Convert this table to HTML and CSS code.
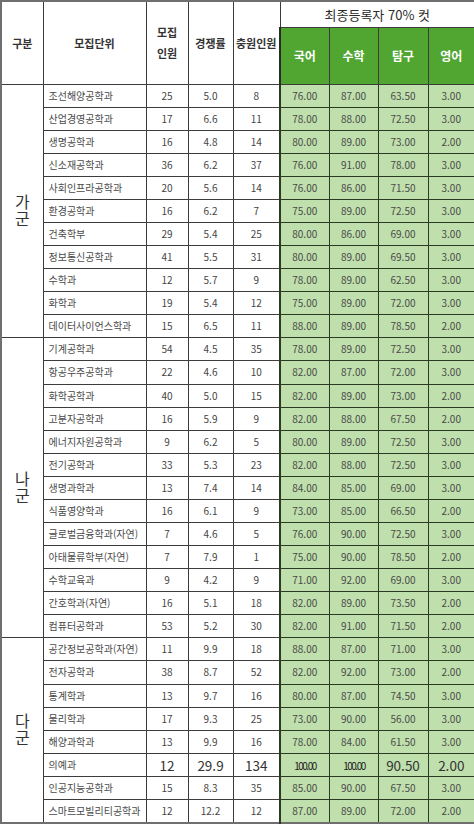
FILE: index.html
```html
<!DOCTYPE html>
<html lang="ko">
<head>
<meta charset="utf-8">
<title>최종등록자 70% 컷</title>
<link rel="stylesheet" href="styles.css">
</head>
<body>
<table class="cut">
  <colgroup>
    <col class="c-grp"><col class="c-dept"><col class="c-num"><col class="c-rate"><col class="c-fill">
    <col class="c-kor"><col class="c-math"><col class="c-inq"><col class="c-eng">
  </colgroup>
  <thead>
    <tr class="h1">
      <th rowspan="2" class="hl">구분</th>
      <th rowspan="2" class="hl">모집단위</th>
      <th rowspan="2" class="hl two">모집<br>인원</th>
      <th rowspan="2" class="hl">경쟁률</th>
      <th rowspan="2" class="hl fill-h">충원인원</th>
      <th colspan="4" class="top">최종등록자 70% 컷</th>
    </tr>
    <tr class="h2">
      <th class="gh gfirst">국어</th>
      <th class="gh">수학</th>
      <th class="gh">탐구</th>
      <th class="gh">영어</th>
    </tr>
  </thead>
  <tbody>
    <tr><td rowspan="11" class="grp"><span class="vt">가군</span></td><td class="dept">조선해양공학과</td><td>25</td><td>5.0</td><td>8</td><td class="g gfirst">76.00</td><td class="g">87.00</td><td class="g">63.50</td><td class="g">3.00</td></tr>
    <tr><td class="dept">산업경영공학과</td><td>17</td><td>6.6</td><td>11</td><td class="g gfirst">78.00</td><td class="g">88.00</td><td class="g">72.50</td><td class="g">3.00</td></tr>
    <tr><td class="dept">생명공학과</td><td>16</td><td>4.8</td><td>14</td><td class="g gfirst">80.00</td><td class="g">89.00</td><td class="g">73.00</td><td class="g">2.00</td></tr>
    <tr><td class="dept">신소재공학과</td><td>36</td><td>6.2</td><td>37</td><td class="g gfirst">76.00</td><td class="g">91.00</td><td class="g">78.00</td><td class="g">3.00</td></tr>
    <tr><td class="dept">사회인프라공학과</td><td>20</td><td>5.6</td><td>14</td><td class="g gfirst">76.00</td><td class="g">86.00</td><td class="g">71.50</td><td class="g">3.00</td></tr>
    <tr><td class="dept">환경공학과</td><td>16</td><td>6.2</td><td>7</td><td class="g gfirst">75.00</td><td class="g">89.00</td><td class="g">72.50</td><td class="g">3.00</td></tr>
    <tr><td class="dept">건축학부</td><td>29</td><td>5.4</td><td>25</td><td class="g gfirst">80.00</td><td class="g">86.00</td><td class="g">69.00</td><td class="g">3.00</td></tr>
    <tr><td class="dept">정보통신공학과</td><td>41</td><td>5.5</td><td>31</td><td class="g gfirst">80.00</td><td class="g">89.00</td><td class="g">69.50</td><td class="g">3.00</td></tr>
    <tr><td class="dept">수학과</td><td>12</td><td>5.7</td><td>9</td><td class="g gfirst">78.00</td><td class="g">89.00</td><td class="g">62.50</td><td class="g">3.00</td></tr>
    <tr><td class="dept">화학과</td><td>19</td><td>5.4</td><td>12</td><td class="g gfirst">75.00</td><td class="g">89.00</td><td class="g">72.00</td><td class="g">3.00</td></tr>
    <tr><td class="dept">데이터사이언스학과</td><td>15</td><td>6.5</td><td>11</td><td class="g gfirst">88.00</td><td class="g">89.00</td><td class="g">78.50</td><td class="g">2.00</td></tr>

    <tr><td rowspan="13" class="grp"><span class="vt">나군</span></td><td class="dept">기계공학과</td><td>54</td><td>4.5</td><td>35</td><td class="g gfirst">78.00</td><td class="g">89.00</td><td class="g">72.50</td><td class="g">3.00</td></tr>
    <tr><td class="dept">항공우주공학과</td><td>22</td><td>4.6</td><td>10</td><td class="g gfirst">82.00</td><td class="g">87.00</td><td class="g">72.00</td><td class="g">3.00</td></tr>
    <tr><td class="dept">화학공학과</td><td>40</td><td>5.0</td><td>15</td><td class="g gfirst">82.00</td><td class="g">89.00</td><td class="g">73.00</td><td class="g">2.00</td></tr>
    <tr><td class="dept">고분자공학과</td><td>16</td><td>5.9</td><td>9</td><td class="g gfirst">82.00</td><td class="g">88.00</td><td class="g">67.50</td><td class="g">2.00</td></tr>
    <tr><td class="dept">에너지자원공학과</td><td>9</td><td>6.2</td><td>5</td><td class="g gfirst">80.00</td><td class="g">89.00</td><td class="g">72.50</td><td class="g">3.00</td></tr>
    <tr><td class="dept">전기공학과</td><td>33</td><td>5.3</td><td>23</td><td class="g gfirst">82.00</td><td class="g">88.00</td><td class="g">72.50</td><td class="g">3.00</td></tr>
    <tr><td class="dept">생명과학과</td><td>13</td><td>7.4</td><td>14</td><td class="g gfirst">84.00</td><td class="g">85.00</td><td class="g">69.00</td><td class="g">3.00</td></tr>
    <tr><td class="dept">식품영양학과</td><td>16</td><td>6.1</td><td>9</td><td class="g gfirst">73.00</td><td class="g">85.00</td><td class="g">66.50</td><td class="g">2.00</td></tr>
    <tr><td class="dept">글로벌금융학과(자연)</td><td>7</td><td>4.6</td><td>5</td><td class="g gfirst">76.00</td><td class="g">90.00</td><td class="g">72.50</td><td class="g">3.00</td></tr>
    <tr><td class="dept">아태물류학부(자연)</td><td>7</td><td>7.9</td><td>1</td><td class="g gfirst">75.00</td><td class="g">90.00</td><td class="g">78.50</td><td class="g">2.00</td></tr>
    <tr><td class="dept">수학교육과</td><td>9</td><td>4.2</td><td>9</td><td class="g gfirst">71.00</td><td class="g">92.00</td><td class="g">69.00</td><td class="g">3.00</td></tr>
    <tr><td class="dept">간호학과(자연)</td><td>16</td><td>5.1</td><td>18</td><td class="g gfirst">82.00</td><td class="g">89.00</td><td class="g">73.50</td><td class="g">2.00</td></tr>
    <tr><td class="dept">컴퓨터공학과</td><td>53</td><td>5.2</td><td>30</td><td class="g gfirst">82.00</td><td class="g">91.00</td><td class="g">71.50</td><td class="g">2.00</td></tr>

    <tr><td rowspan="8" class="grp"><span class="vt">다군</span></td><td class="dept">공간정보공학과(자연)</td><td>11</td><td>9.9</td><td>18</td><td class="g gfirst">88.00</td><td class="g">87.00</td><td class="g">71.00</td><td class="g">3.00</td></tr>
    <tr><td class="dept">전자공학과</td><td>38</td><td>8.7</td><td>52</td><td class="g gfirst">82.00</td><td class="g">92.00</td><td class="g">73.00</td><td class="g">2.00</td></tr>
    <tr><td class="dept">통계학과</td><td>13</td><td>9.7</td><td>16</td><td class="g gfirst">80.00</td><td class="g">87.00</td><td class="g">74.50</td><td class="g">3.00</td></tr>
    <tr><td class="dept">물리학과</td><td>17</td><td>9.3</td><td>25</td><td class="g gfirst">73.00</td><td class="g">90.00</td><td class="g">56.00</td><td class="g">3.00</td></tr>
    <tr><td class="dept">해양과학과</td><td>13</td><td>9.9</td><td>16</td><td class="g gfirst">78.00</td><td class="g">84.00</td><td class="g">61.50</td><td class="g">3.00</td></tr>
    <tr class="big"><td class="dept">의예과</td><td>12</td><td>29.9</td><td>134</td><td class="g gfirst"><span class="squeeze">100.00</span></td><td class="g"><span class="squeeze">100.00</span></td><td class="g">90.50</td><td class="g">2.00</td></tr>
    <tr><td class="dept">인공지능공학과</td><td>15</td><td>8.3</td><td>35</td><td class="g gfirst">85.00</td><td class="g">90.00</td><td class="g">67.50</td><td class="g">3.00</td></tr>
    <tr><td class="dept">스마트모빌리티공학과</td><td>12</td><td>12.2</td><td>12</td><td class="g gfirst">87.00</td><td class="g">89.00</td><td class="g">72.00</td><td class="g">2.00</td></tr>
  </tbody>
</table>
</body>
</html>
```

FILE: styles.css
```css
html, body {
  margin: 0;
  padding: 0;
  background: #ffffff;
}

.cut {
  width: 474px;
  table-layout: fixed;
  border-collapse: collapse;
  border: 2px solid #6f6f6f;
  font-family: "Noto Sans CJK KR", "Noto Sans", sans-serif;
  color: #3a3a3a;
}

.c-grp { width: 42px; }
.c-dept { width: 103px; }
.c-num { width: 42px; }
.c-rate { width: 45px; }
.c-fill { width: 47px; }
.c-kor { width: 49px; }
.c-math { width: 49px; }
.c-inq { width: 50px; }
.c-eng { width: 47px; }

.cut th,
.cut td {
  border: 1px solid #3c3c3c;
  padding: 0;
  text-align: center;
  vertical-align: middle;
  overflow: hidden;
  white-space: nowrap;
}

.h1 { height: 26px; }
.h2 { height: 57px; }

.hl {
  font-size: 11px;
  font-weight: 700;
  color: #333333;
  background: #ffffff;
}

.hl.two {
  line-height: 21px;
}

.top {
  font-size: 13px;
  font-weight: 400;
  color: #2a2a2a;
  background: #ffffff;
  border-left: 2px solid #2a2a2a;
}

.gh {
  background: #50a630;
  color: #ffffff;
  font-size: 12px;
  font-weight: 700;
  border-color: #2c3a24;
}

.cut tbody tr {
  height: 23.08px;
}

.cut td {
  font-size: 10px;
  line-height: 12px;
  color: #444444;
}

.cut td.dept {
  text-align: left;
  padding-left: 5px;
  color: #4a4a4a;
}

.cut td.grp {
  font-size: 16px;
  color: #333333;
  font-weight: 400;
}

.vt {
  display: inline-block;
  writing-mode: vertical-rl;
  text-orientation: upright;
  letter-spacing: 1px;
  line-height: 16px;
}

.cut td.g {
  background: #bfdfac;
  color: #4a4a4a;
  border-color: #2c3a24;
}

.cut .gfirst {
  border-left: 2px solid #2a2a2a;
}

.big td:not(.dept) {
  font-size: 13.5px;
  color: #333333;
}

.squeeze {
  display: inline-block;
  font-size: 11px;
  letter-spacing: -1.6px;
  transform: scaleX(0.9);
  color: #222222;
}
```
